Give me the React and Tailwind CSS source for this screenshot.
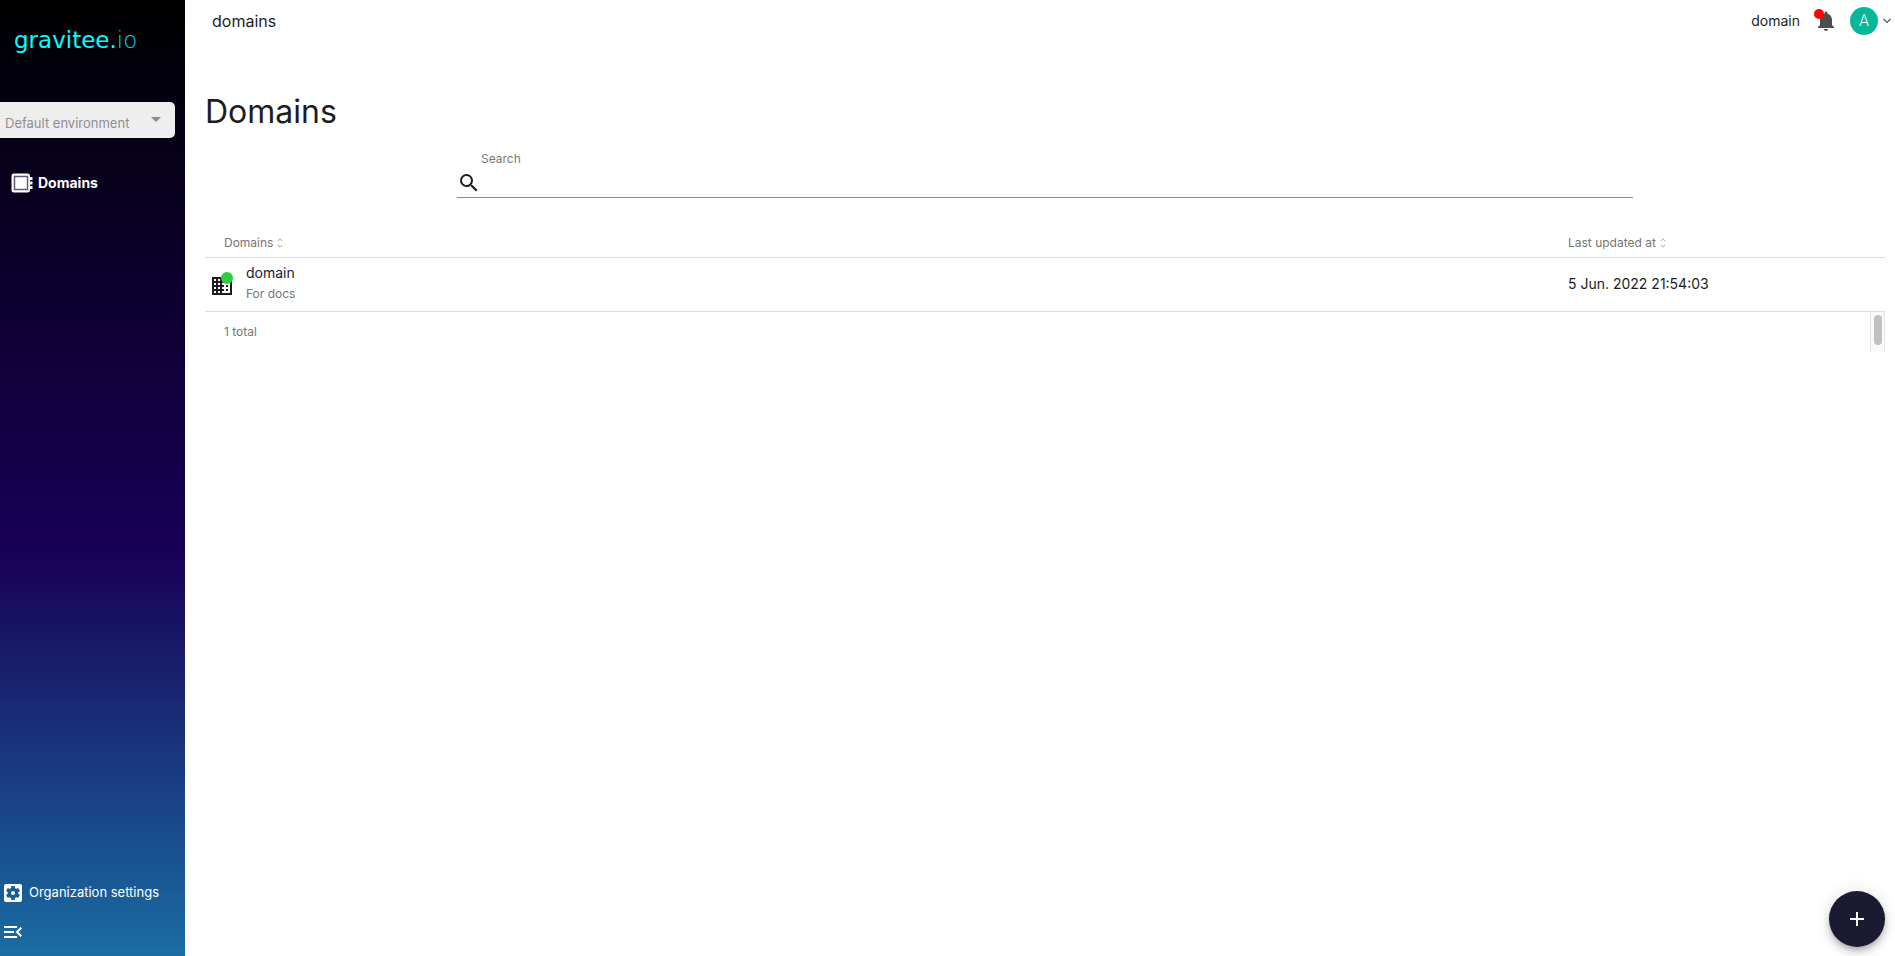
import {
  MdAdd,
  MdArrowDropDown,
  MdMenuOpen,
  MdNotifications,
  MdSearch,
  MdSettingsApplications,
} from "react-icons/md";

const domains = [
  { name: "domain", description: "For docs", updatedAt: "5 Jun. 2022 21:54:03" },
];

function DomainsIcon() {
  return (
    <svg width="22" height="20" viewBox="0 0 22 20" aria-hidden="true">
      <rect x="0.5" y="0.5" width="18.500" height="19" rx="2.5" fill="#fff" />
      <path d="M18 4h3.500v3H18zM18 8.500h3.500v3H18zM18 13h3.500v3H18z" fill="#fff" />
      <rect x="3.500" y="3.500" width="13" height="13" fill="none" stroke="#5f5c78" strokeWidth="1.500" />
    </svg>
  );
}

function BuildingIcon() {
  return (
    <svg width="20" height="18" viewBox="0 0 20 18" aria-hidden="true">
      <path
        fill="#1d1d1d"
        fillRule="evenodd"
        d="M0 0h10v4h10v14H0zM2 2v2h2V2zM6 2v2h2V2zM2 6v2h2V6zM6 6v2h2V6zM2 10v2h2v-2zM6 10v2h2v-2zM2 14v2h2v-2zM6 14v2h2v-2zM10 6v2h2v2h-2v2h2v2h-2v2h8V6zM14 8h2v2h-2zM14 12h2v2h-2z"
      />
    </svg>
  );
}

function SortIcon() {
  return (
    <svg
      width="6"
      height="10"
      viewBox="0 0 6 10"
      fill="none"
      stroke="#a3a3a3"
      strokeWidth="1"
      aria-hidden="true"
    >
      <path d="M.8 3 3 .8 5.200 3M.8 7 3 9.200 5.200 7" />
    </svg>
  );
}

function Sidebar() {
  return (
    <aside className="flex w-[185px] shrink-0 flex-col bg-[linear-gradient(180deg,#000000_0%,#180058_58%,#1a6da3_100%)] text-[13px] text-white">
      <a
        href="#home"
        className="mt-[22px] ml-3.5 font-['DejaVu_Sans'] text-[23px] leading-9 font-normal text-[#0ff]"
      >
        gravitee.<span className="font-extralight text-[#00dde0]">io</span>
      </a>

      <div className="relative mt-11 mr-2.5">
        <select
          aria-label="Environment"
          defaultValue="default"
          className="h-9 w-full appearance-none rounded-r-[5px] bg-[#eeeeee] pt-2 pl-[5px] text-[13px] text-[#8e8e8e]"
        >
          <option value="default">Default environment</option>
        </select>
        <MdArrowDropDown className="pointer-events-none absolute top-[5px] right-[7px] size-6 text-[#8a8a8a]" />
      </div>

      <nav className="mt-8">
        <a href="#domains" className="flex h-[25px] items-center gap-[5px] pl-[11px] text-sm font-bold">
          <DomainsIcon />
          Domains
        </a>
      </nav>

      <div className="mt-auto flex flex-col items-start gap-[15px] pb-3 pl-px">
        <a href="#settings" className="flex h-6 items-center gap-1">
          <MdSettingsApplications className="size-6" />
          Organization settings
        </a>
        <button type="button" aria-label="Collapse menu">
          <MdMenuOpen className="size-6" />
        </button>
      </div>
    </aside>
  );
}

function TopBar() {
  return (
    <header className="flex h-[42px] items-center justify-between pr-1 pl-[27px]">
      <span className="text-base">domains</span>
      <div className="flex items-center text-sm">
        <span>domain</span>
        <button type="button" aria-label="Notifications" className="relative ml-3.5">
          <MdNotifications className="size-6 text-[#4d4d4d]" />
          <span className="absolute top-0 left-0 size-2.5 rounded-full bg-[#ff0000]" />
        </button>
        <button type="button" aria-label="Account" className="ml-3 flex items-center gap-[5px]">
          <span className="flex size-7 items-center justify-center rounded-full bg-[#07b79b] font-[Roboto] text-base font-light text-white">
            A
          </span>
          <svg width="8" height="6" viewBox="0 0 8 6" fill="none" stroke="#555" strokeWidth="1.200" aria-hidden="true">
            <path d="M.5 1 4 4.500 7.500 1" />
          </svg>
        </button>
      </div>
    </header>
  );
}

function SearchField() {
  return (
    <div className="mx-auto mt-[21px] w-[70%] border-b border-[#8c8c8c]">
      <label htmlFor="search" className="block pl-6 text-xs leading-3 text-[#7a7a7a]">
        Search
      </label>
      <div className="mt-1.5 flex items-center pb-0.5">
        <MdSearch className="size-6 text-[#1d1d1d]" />
        <input id="search" type="text" className="h-6 flex-1 bg-transparent outline-none" />
      </div>
    </div>
  );
}

function DomainTable() {
  return (
    <section className="mt-[31px]">
      <table className="w-full table-fixed border-collapse text-left">
        <thead>
          <tr className="border-b border-[#dcdcdc] text-xs text-[#757575]">
            <th className="h-7 pl-[19px] font-normal">
              <button type="button" className="flex items-center gap-1">
                Domains <SortIcon />
              </button>
            </th>
            <th className="w-[317px] font-normal">
              <button type="button" className="flex items-center gap-1">
                Last updated at <SortIcon />
              </button>
            </th>
          </tr>
        </thead>
        <tbody>
          {domains.map((d) => (
            <tr key={d.name} className="border-b border-[#dcdcdc]">
              <td className="h-[54px] pl-[7px]">
                <div className="flex items-center gap-3.5">
                  <span className="relative mt-1">
                    <BuildingIcon />
                    <span className="absolute -top-[5px] -right-px size-3 rounded-full bg-[#2ecc40]" />
                  </span>
                  <div>
                    <a href="#domain" className="block text-sm leading-5 text-[#1a1a33]">
                      {d.name}
                    </a>
                    <p className="text-xs leading-[22px] text-[#757575]">{d.description}</p>
                  </div>
                </div>
              </td>
              <td className="text-sm">{d.updatedAt}</td>
            </tr>
          ))}
        </tbody>
      </table>
      <div className="flex h-10 justify-between">
        <p className="pl-[19px] text-xs leading-10 text-[#757575]">{domains.length} total</p>
        <div className="flex w-[15px] justify-center border-x border-[#e5e5e5] bg-[#fafafa] pt-[3px]">
          <div className="h-[30px] w-2 rounded-full bg-[#c1c1c1]" />
        </div>
      </div>
    </section>
  );
}

export default function App() {
  return (
    <div className="flex min-h-screen bg-white font-[Inter,sans-serif] text-[#1d1d1d]">
      <Sidebar />
      <div className="min-w-0 flex-1">
        <TopBar />
        <main className="pt-[50px] pr-2.5 pl-5">
          <h1 className="text-[32px] leading-10">Domains</h1>
          <SearchField />
          <DomainTable />
        </main>
      </div>
      <button
        type="button"
        aria-label="Add domain"
        className="fixed right-2.5 bottom-[9px] flex size-14 items-center justify-center rounded-full bg-[#1a1a33] text-white shadow-[0_3px_5px_-1px_rgba(0,0,0,0.2),0_6px_10px_0_rgba(0,0,0,0.14),0_1px_18px_0_rgba(0,0,0,0.12)]"
      >
        <MdAdd className="size-6" />
      </button>
    </div>
  );
}
